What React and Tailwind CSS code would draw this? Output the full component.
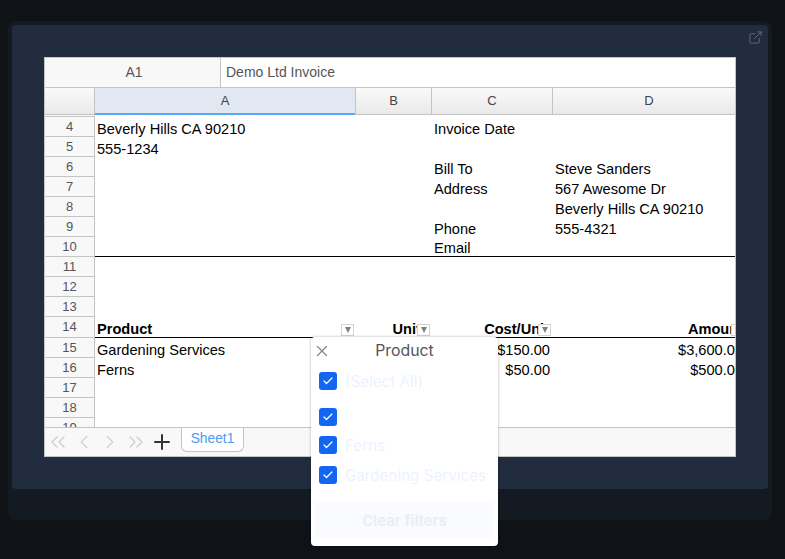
import React from "react";
import { X, Check, Plus, ChevronLeft, ChevronRight, ChevronsLeft, ChevronsRight, ExternalLink } from "lucide-react";

const columns = [
  { key: "A", width: "w-[260px]" },
  { key: "B", width: "w-[76px]" },
  { key: "C", width: "w-[121px]" },
  { key: "D", width: "w-[193px]" },
];

const rows = [
  { n: 4, a: "Beverly Hills CA 90210", c: "Invoice Date" },
  { n: 5, a: "555-1234" },
  { n: 6, c: "Bill To", d: "Steve Sanders" },
  { n: 7, c: "Address", d: "567 Awesome Dr" },
  { n: 8, d: "Beverly Hills CA 90210" },
  { n: 9, c: "Phone", d: "555-4321" },
  { n: 10, c: "Email", line: true },
  { n: 11 },
  { n: 12 },
  { n: 13 },
  { n: 14, header: true, line: true },
  { n: 15, a: "Gardening Services", c: "$150.00", d: "$3,600.00", money: true },
  { n: 16, a: "Ferns", c: "$50.00", d: "$500.00", money: true },
  { n: 17 },
  { n: 18 },
  { n: 19 },
];

const filterItems = [
  { label: "", className: "mt-[18px]" },
  { label: "Ferns", className: "mt-[10px]" },
  { label: "Gardening Services", className: "mt-3" },
];

function HeaderCell({ label, width, align = "right", pad = "pr-0.5" }) {
  return (
    <div className={`${width} relative h-full shrink-0 overflow-hidden`}>
      <div className={`whitespace-nowrap pt-[3px] font-bold ${align === "right" ? `text-right ${pad}` : "pl-0.5"}`}>
        {label}
      </div>
      <span className="absolute bottom-px right-px flex h-3 w-[13px] items-center justify-center border border-[#d4d4d4] bg-white">
        <span className="h-0 w-0 border-x-[3.5px] border-t-[6px] border-x-transparent border-t-[#808080]" />
      </span>
    </div>
  );
}

function SheetRow({ row }) {
  return (
    <div className={`flex shrink-0 ${row.header ? "h-[21px]" : "h-5"}`}>
      <div className="flex w-[50px] shrink-0 items-center justify-center border-b border-r border-[#c4c4c4] bg-[#f8f8f8] text-[13px] text-[#555]">
        {row.n}
      </div>
      <div
        className={`flex w-[650px] shrink-0 text-[14.6px] leading-[19px] text-black ${
          row.line ? "border-b border-black" : ""
        }`}
      >
        {row.header ? (
          <>
            <HeaderCell label="Product" width="w-[260px]" align="left" />
            <HeaderCell label="Units" width="w-[76px]" />
            <HeaderCell label="Cost/Unit" width="w-[121px]" pad="pr-[3px]" />
            <HeaderCell label="Amount" width="w-[193px]" />
          </>
        ) : (
          <>
            <div className="w-[336px] shrink-0 whitespace-nowrap pl-0.5 pt-[3px]">{row.a}</div>
            <div
              className={`w-[121px] shrink-0 whitespace-nowrap ${row.line ? "pt-0.5" : "pt-[3px]"} ${
                row.money ? "pr-[2px] text-right" : "pl-[3px]"
              }`}
            >
              {row.c}
            </div>
            <div className={`w-[193px] shrink-0 whitespace-nowrap pt-[3px] ${row.money ? "pr-0.5 text-right" : "pl-[3px]"}`}>
              {row.d}
            </div>
          </>
        )}
      </div>
    </div>
  );
}

function FilterCheck({ label, className = "" }) {
  return (
    <div className={`flex h-[18px] items-center gap-[8px] ${className}`}>
      <span className="flex h-[18px] w-[18px] items-center justify-center rounded-[3px] bg-[#1266f1]">
        <Check className="h-3 w-3 text-white" strokeWidth={2.5} />
      </span>
      <span className="mt-0.5 whitespace-nowrap text-[15.2px] leading-5 text-[#edf3fd]">{label}</span>
    </div>
  );
}

export default function App() {
  return (
    <div className="relative h-[559px] w-[785px] overflow-hidden bg-[#0f1216] pt-[21px] font-['Liberation_Sans',sans-serif]">
      <div className="ml-2 h-[499px] w-[764px] rounded-lg bg-[#131a22] p-1">
        <div className="relative h-[464px] rounded bg-[#212d3e] px-8 pt-8">
          <ExternalLink className="absolute right-[5px] top-[5px] h-[15px] w-[15px] text-[#5f6b7a]" strokeWidth={1.5} />

          <div className="flex h-[400px] w-[692px] flex-col overflow-hidden border border-[#c4c4c4] bg-white">
            <div className="flex h-[30px] shrink-0 border-b border-[#c4c4c4] text-[14px] text-[#555]">
              <div className="flex w-[176px] items-center justify-center border-r border-[#c4c4c4] bg-[#f8f8f8] pl-[3px]">A1</div>
              <div className="flex flex-1 items-center pl-[5px]">Demo Ltd Invoice</div>
            </div>

            <div className="flex h-[27px] shrink-0 border-b border-[#c4c4c4] text-[13px] text-[#444]">
              <div className="w-[50px] shrink-0 border-r border-[#c4c4c4] bg-linear-to-b from-[#fafafa] to-[#e9e9e9]" />
              {columns.map((col) => (
                <div
                  key={col.key}
                  className={`${col.width} flex shrink-0 items-center justify-center ${
                    col.key === "A"
                      ? "-mb-px border-b-2 border-[#5aa9f8] bg-[#e1e8f1]"
                      : "border-l border-[#c4c4c4] bg-linear-to-b from-[#fafafa] to-[#e9e9e9]"
                  }`}
                >
                  {col.key}
                </div>
              ))}
            </div>

            <div className="min-h-0 flex-1 overflow-hidden">
              <div className="h-[2px] w-[50px] border-b border-r border-[#c4c4c4] bg-[#f8f8f8]" />
              {rows.map((row) => (
                <SheetRow key={row.n} row={row} />
              ))}
            </div>

            <div className="flex h-[29px] shrink-0 items-start border-t border-[#c4c4c4] bg-[#f8f8f8]">
              <div className="flex h-full items-center text-[#d2d2d2]">
                <span className="flex w-[26px] justify-center">
                  <ChevronsLeft className="h-6 w-6" strokeWidth={1.5} />
                </span>
                <span className="flex w-[26px] justify-center">
                  <ChevronLeft className="h-[22px] w-[22px]" strokeWidth={1.5} />
                </span>
                <span className="flex w-[26px] justify-center">
                  <ChevronRight className="h-[22px] w-[22px]" strokeWidth={1.5} />
                </span>
                <span className="flex w-[26px] justify-center">
                  <ChevronsRight className="h-6 w-6" strokeWidth={1.5} />
                </span>
                <span className="flex w-[26px] justify-center text-[#333]">
                  <Plus className="h-6 w-6" strokeWidth={2} />
                </span>
              </div>
              <div className="ml-[6px] flex h-6 w-[63px] items-center justify-center rounded-b-md border border-t-0 border-[#c4c4c4] bg-white pb-px text-[13.8px] text-[#4d9af0]">
                Sheet1
              </div>
            </div>
          </div>
        </div>
      </div>

      <div className="absolute left-[311px] top-[337px] h-[209px] w-[187px] rounded bg-white font-['Inter',sans-serif] shadow-[0_0_3px_rgba(0,0,0,0.3)]">
        <div className="relative flex h-[28px] items-center justify-center text-[15.8px] text-[#555]">
          <X className="absolute left-0.5 top-[5px] h-[18px] w-[18px] text-[#888]" strokeWidth={1.75} />
          Product
        </div>
        <div className="ml-2 pt-[7px]">
          <FilterCheck label="(Select All)" />
          {filterItems.map((item) => (
            <FilterCheck key={item.label} label={item.label} className={item.className} />
          ))}
        </div>
        <div className="mx-1 mt-[18px] flex h-9 items-center justify-center rounded bg-[#f9fbfe] pt-0.5 text-[15px] font-semibold text-[#e7eefa]">
          Clear filters
        </div>
      </div>
    </div>
  );
}
